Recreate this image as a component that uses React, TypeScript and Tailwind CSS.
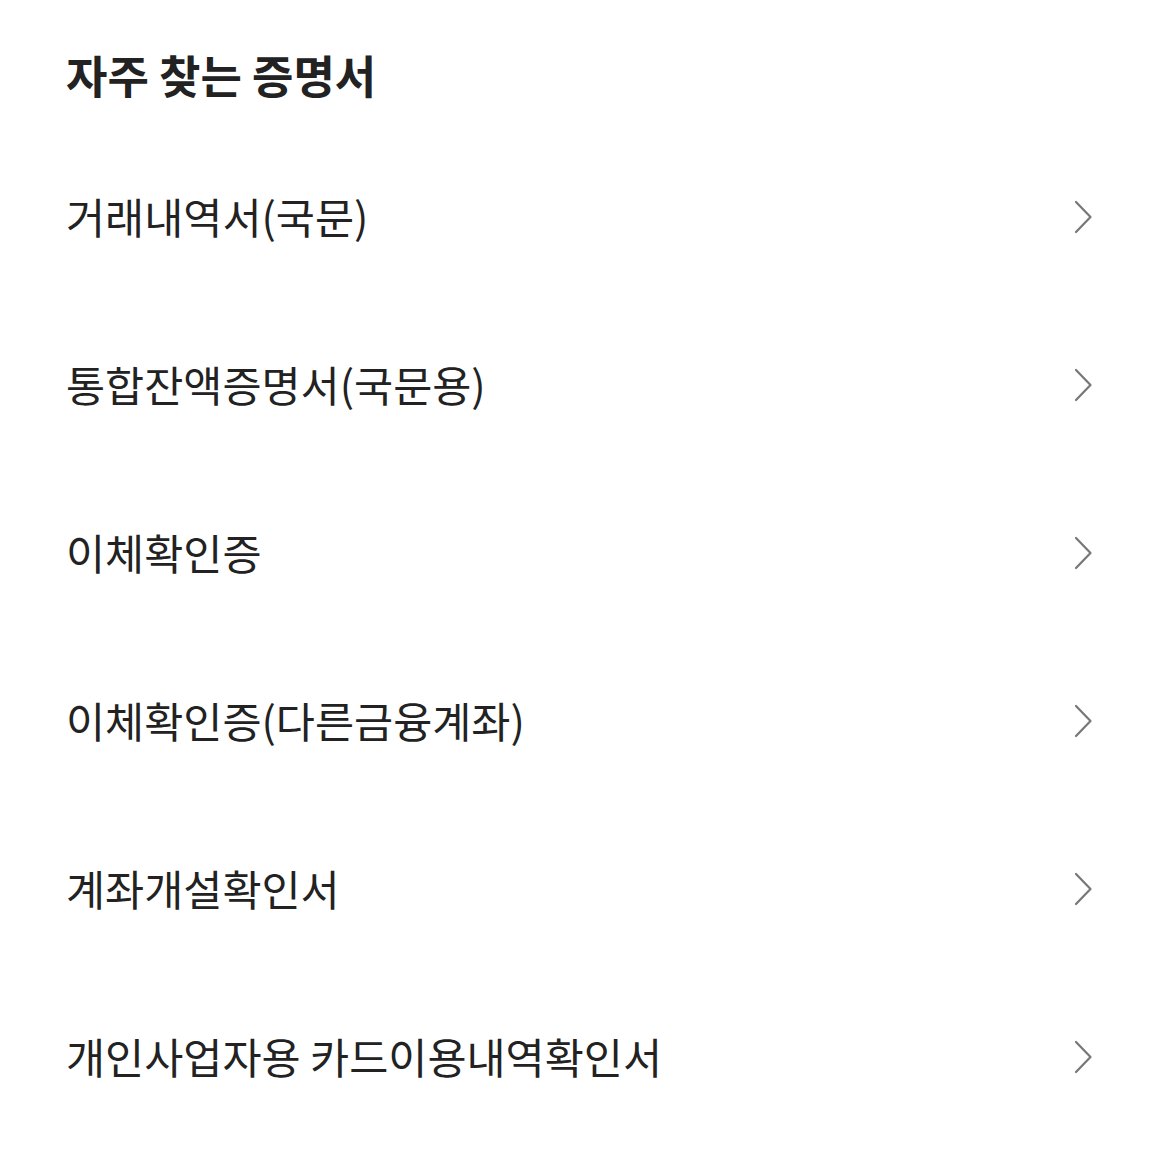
const items = [
  '거래내역서(국문)',
  '통합잔액증명서(국문용)',
  '이체확인증',
  '이체확인증(다른금융계좌)',
  '계좌개설확인서',
  '개인사업자용 카드이용내역확인서',
];

function Chevron() {
  return (
    <svg width="20" height="34" viewBox="0 0 20 34" fill="none" className="shrink-0 mt-[2px]">
      <path d="M3 2L17.5 17L3 32" stroke="#777777" strokeWidth="2.2" strokeLinecap="round" strokeLinejoin="round" />
    </svg>
  );
}

export default function App() {
  return (
    <div
      className="w-[1170px] min-h-[1172px] bg-white pl-[66px] pr-[77px] pt-[45px]"
      style={{ fontFamily: '"Noto Sans CJK KR", "Noto Sans", sans-serif' }}
    >
      <h1 className="text-[45px] leading-[60px] font-bold text-[#222222]">자주 찾는 증명서</h1>
      <ul className="mt-[27px]">
        {items.map((item) => (
          <li key={item} className="h-[168px] flex items-center justify-between">
            <span className="text-[42.5px] leading-none text-[#222222]">{item}</span>
            <Chevron />
          </li>
        ))}
      </ul>
    </div>
  );
}
